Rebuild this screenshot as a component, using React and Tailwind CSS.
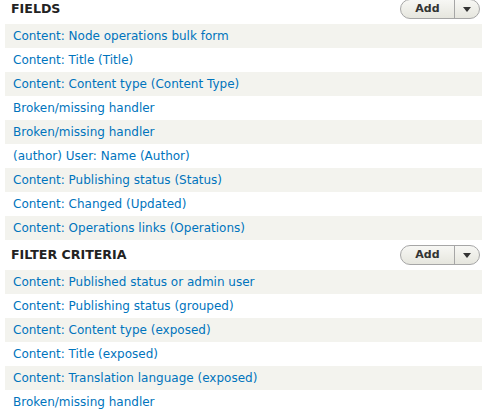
const fields = [
  'Content: Node operations bulk form',
  'Content: Title (Title)',
  'Content: Content type (Content Type)',
  'Broken/missing handler',
  'Broken/missing handler',
  '(author) User: Name (Author)',
  'Content: Publishing status (Status)',
  'Content: Changed (Updated)',
  'Content: Operations links (Operations)',
];

const filters = [
  'Content: Published status or admin user',
  'Content: Publishing status (grouped)',
  'Content: Content type (exposed)',
  'Content: Title (exposed)',
  'Content: Translation language (exposed)',
  'Broken/missing handler',
];

const AddButton = () => (
  <div className="flex h-[20px] w-[80px] rounded-full border border-[#a6a6a6] bg-gradient-to-b from-[#f7f7f4] to-[#e6e6de] text-[#333] overflow-hidden">
    <span className="flex-1 flex items-center justify-center text-[11px] font-bold">Add</span>
    <span className="w-[25px] border-l border-[#a6a6a6] flex items-center justify-center">
      <svg width="8" height="5" viewBox="0 0 8 5">
        <path d="M0 0h8L4 5z" fill="#333" />
      </svg>
    </span>
  </div>
);

const Section = ({ title, items }) => (
  <section>
    <div className="h-[30px] flex items-center justify-between pl-[6px] pr-[2px]">
      <h2 className="text-[12.6px] font-bold uppercase text-[#222]">{title}</h2>
      <AddButton />
    </div>
    {items.map((item, i) => (
      <div
        key={i}
        className={`h-[24px] flex items-center pl-[8px] ${i % 2 === 0 ? 'bg-[#f3f3ee]' : 'bg-white'}`}
      >
        <a href="#" className="text-[12px] text-[#0074bd]">{item}</a>
      </div>
    ))}
  </section>
);

export default function App() {
  return (
    <div
      className="w-[482px] h-[413px] overflow-hidden bg-white pl-[5px]"
      style={{ fontFamily: '"DejaVu Sans", Verdana, sans-serif' }}
    >
      <div className="mt-[-6px]">
        <Section title="Fields" items={fields} />
        <Section title="Filter criteria" items={filters} />
      </div>
    </div>
  );
}
